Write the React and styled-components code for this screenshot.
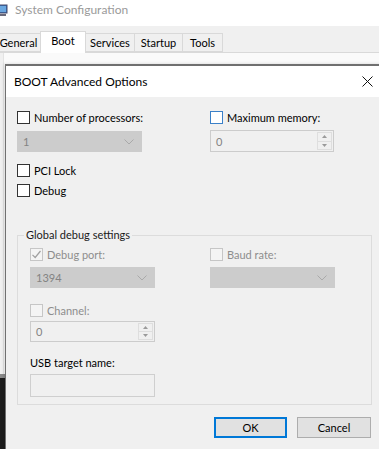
import React from "react";
import styled, { createGlobalStyle } from "styled-components";

const Global = createGlobalStyle`
  html, body { margin: 0; padding: 0; }
  body {
    width: 379px; height: 449px; overflow: hidden;
    font-family: Lato, "Noto Sans", sans-serif;
    font-size: 11px; color: #000;
    background: #f0f0f0;
  }
`;

const Page = styled.div`
  position: relative;
  width: 379px;
  height: 449px;
  overflow: hidden;
  display: flex;
  flex-direction: column;
`;

/* ---------- background window ---------- */
const BgWindow = styled.div`
  display: flex;
  flex-direction: column;
  height: 374px;
  background: #f0f0f0;
`;

const BgTitle = styled.div`
  height: 26px;
  background: #fff;
  display: flex;
  align-items: flex-start;
  padding-top: 2px;
  box-sizing: border-box;
  gap: 7px;
`;

const BgTitleText = styled.span`
  font-size: 12px;
  line-height: 16px;
  color: #9a9a9a;
`;

const TabStrip = styled.div`
  display: flex;
  align-items: flex-end;
  height: 27px;
  box-sizing: border-box;
  background: #f0f0f0;
  border-bottom: 1px solid #d9d9d9;
  margin-left: -4px;
`;

const Tab = styled.div`
  box-sizing: border-box;
  width: ${(p) => p.$w}px;
  height: ${(p) => (p.$active ? 22 : 19)}px;
  margin-bottom: ${(p) => (p.$active ? -1 : 0)}px;
  background: ${(p) => (p.$active ? "#fff" : "#f0f0f0")};
  border: 1px solid #d9d9d9;
  border-bottom: ${(p) => (p.$active ? "none" : "1px solid #d9d9d9")};
  margin-right: -1px;
  position: relative;
  z-index: ${(p) => (p.$active ? 1 : 0)};
  display: flex;
  justify-content: center;
  align-items: ${(p) => (p.$active ? "flex-start" : "center")};
  padding-top: ${(p) => (p.$active ? 2 : 0)}px;
  font-size: 11px;
  line-height: 14px;
`;

const TabPage = styled.div`
  flex: 1;
  background: #fafafa;
  border-left: 1px solid #e3e3e3;
  margin-left: 3px;
`;

const Desktop = styled.div`
  flex: 1;
  background: linear-gradient(90deg, #1c1c1c, #2e2626 60%, #151515);
  border-top: 4px solid #8a8a8a;
`;

/* ---------- dialog ---------- */
const Dialog = styled.div`
  position: absolute;
  left: 5px;
  top: 64px;
  width: 379px;
  box-sizing: border-box;
  border: 1px solid #707070;
  border-top-width: 2px;
  background: #f0f0f0;
  box-shadow: -1px 0 3px rgba(0, 0, 0, 0.15);
`;

const DlgTitle = styled.div`
  height: 31px;
  background: #fff;
  display: flex;
  align-items: center;
  justify-content: space-between;
  padding: 0 10px 0 8px;
`;

const DlgTitleText = styled.span`
  font-size: 12px;
  line-height: 16px;
`;

const DlgBody = styled.div`
  padding: 14px 11px 12px 11px;
  display: flex;
  flex-direction: column;
`;

const TwoCol = styled.div`
  display: grid;
  grid-template-columns: ${(p) => p.$first}px 1fr;
`;

const Field = styled.div`
  display: flex;
  flex-direction: column;
  gap: ${(p) => p.$gap}px;
  margin-top: ${(p) => p.$mt || 0}px;
`;

const CheckStack = styled.div`
  display: flex;
  flex-direction: column;
  gap: 7px;
  margin-top: 12px;
`;

const CheckRow = styled.label`
  display: flex;
  align-items: center;
  gap: 4px;
  height: 13px;
  line-height: 13px;
  color: ${(p) => (p.$disabled ? "#8d8d8d" : "#000")};
`;

const Box = styled.span`
  box-sizing: border-box;
  width: 13px;
  height: 13px;
  flex: none;
  border: 1px solid
    ${(p) =>
      p.$state === "focus" ? "#3a80c8" : p.$state === "disabled" ? "#c6c6c6" : "#333"};
  background: ${(p) => (p.$state === "disabled" ? "#f4f4f4" : "#fff")};
  display: flex;
  align-items: center;
  justify-content: center;
`;

const Combo = styled.div`
  box-sizing: border-box;
  width: ${(p) => p.$w}px;
  height: ${(p) => p.$h}px;
  background: #cccccc;
  border: 1px solid #cccccc;
  display: flex;
  align-items: center;
  justify-content: space-between;
  padding: 0 7px 0 5px;
  color: #838383;
`;

const Spin = styled.div`
  box-sizing: border-box;
  width: ${(p) => p.$w}px;
  height: ${(p) => p.$h}px;
  background: #f0f0f0;
  border: 1px solid #cccccc;
  display: flex;
  align-items: stretch;
  color: #838383;
`;

const SpinText = styled.span`
  flex: 1;
  display: flex;
  align-items: center;
  padding-left: 5px;
`;

const SpinBtns = styled.div`
  width: 15px;
  margin: 1px;
  border: 1px solid #dedede;
  box-sizing: border-box;
  display: flex;
  flex-direction: column;
`;

const SpinHalf = styled.div`
  flex: 1;
  display: flex;
  align-items: center;
  justify-content: center;
  border-top: ${(p) => (p.$bottom ? "1px solid #dedede" : "none")};
`;

const TextBox = styled.div`
  box-sizing: border-box;
  width: 125px;
  height: 23px;
  border: 1px solid #cfcfcf;
  background: #f0f0f0;
`;

const Group = styled.fieldset`
  margin: 31px 0 0 0;
  padding: 0 12px 7px 12px;
  border: 1px solid #dcdcdc;
  display: flex;
  flex-direction: column;
  min-width: 0;
`;

const Legend = styled.legend`
  padding: 0 2px;
  margin-left: -6px;
  font-size: 11px;
  line-height: 14px;
  color: #1a1a1a;
`;

const GroupInner = styled.div`
  display: flex;
  flex-direction: column;
  padding-top: 6px;
`;

const Label = styled.div`
  line-height: 14px;
  height: 14px;
`;

const ButtonRow = styled.div`
  display: flex;
  justify-content: flex-end;
  gap: 10px;
  margin-top: 12px;
  padding-right: 1px;
`;

const Button = styled.button`
  box-sizing: border-box;
  width: ${(p) => p.$w}px;
  height: 21px;
  background: #e1e1e1;
  border: ${(p) => (p.$primary ? "2px solid #0078d7" : "1px solid #adadad")};
  font-family: inherit;
  font-size: 11px;
  color: #000;
  padding: 0;
  margin: 0;
`;

/* ---------- icons ---------- */
const Chevron = () => (
  <svg width="10" height="6" viewBox="0 0 10 6">
    <path d="M0.5 0.5 L5 5 L9.5 0.5" fill="none" stroke="#a9a9a9" strokeWidth="1" />
  </svg>
);

const Arrow = ({ down }) => (
  <svg width="5" height="3" viewBox="0 0 5 3">
    <path d={down ? "M0 0 H5 L2.5 3 Z" : "M0 3 H5 L2.5 0 Z"} fill="#9a9a9a" />
  </svg>
);

const CheckMark = () => (
  <svg width="11" height="11" viewBox="0 0 11 11">
    <path d="M1.5 5.8 L4.2 8.5 L9.5 2" fill="none" stroke="#a0a0a0" strokeWidth="1.2" />
  </svg>
);

const CloseX = () => (
  <svg width="11" height="11" viewBox="0 0 11 11">
    <path d="M0.5 0.5 L10.5 10.5 M10.5 0.5 L0.5 10.5" stroke="#111" strokeWidth="1" />
  </svg>
);

const AppIcon = () => (
  <svg width="8" height="14" viewBox="0 0 8 14" style={{ marginTop: 2 }}>
    <rect x="-4" y="1" width="11" height="8" fill="#2f6fb6" stroke="#4a4a6a" strokeWidth="1" />
    <rect x="-3" y="2" width="9" height="6" fill="#6aa7e0" />
    <rect x="-2" y="10" width="8" height="2" fill="#6a6a7a" />
  </svg>
);

const Check = ({ label, state = "normal", checked, disabled }) => (
  <CheckRow $disabled={disabled}>
    <Box $state={state}>{checked && <CheckMark />}</Box>
    {label}
  </CheckRow>
);

const SpinBox = ({ w, h, value }) => (
  <Spin $w={w} $h={h}>
    <SpinText>{value}</SpinText>
    <SpinBtns>
      <SpinHalf><Arrow /></SpinHalf>
      <SpinHalf $bottom><Arrow down /></SpinHalf>
    </SpinBtns>
  </Spin>
);

const tabs = [
  { name: "General", w: 45 },
  { name: "Boot", w: 46, active: true },
  { name: "Services", w: 50 },
  { name: "Startup", w: 49 },
  { name: "Tools", w: 41 },
];

export default function App() {
  return (
    <>
      <Global />
      <Page>
        <BgWindow>
          <BgTitle>
            <AppIcon />
            <BgTitleText>System Configuration</BgTitleText>
          </BgTitle>
          <TabStrip>
            {tabs.map((t) => (
              <Tab key={t.name} $w={t.w} $active={t.active}>
                {t.name}
              </Tab>
            ))}
          </TabStrip>
          <TabPage />
        </BgWindow>
        <Desktop />

        <Dialog>
          <DlgTitle>
            <DlgTitleText>BOOT Advanced Options</DlgTitleText>
            <CloseX />
          </DlgTitle>
          <DlgBody>
            <TwoCol $first={193}>
              <Field $gap={7}>
                <Check label="Number of processors:" />
                <Combo $w={125} $h={21}>
                  <span>1</span>
                  <Chevron />
                </Combo>
              </Field>
              <Field $gap={6}>
                <Check label="Maximum memory:" state="focus" />
                <SpinBox w={124} h={22} value="0" />
              </Field>
            </TwoCol>

            <CheckStack>
              <Check label="PCI Lock" />
              <Check label="Debug" />
            </CheckStack>

            <Group>
              <Legend>Global debug settings</Legend>
              <GroupInner>
                <TwoCol $first={180}>
                  <Field $gap={6}>
                    <Check label="Debug port:" state="disabled" checked disabled />
                    <Combo $w={125} $h={21}>
                      <span>1394</span>
                      <Chevron />
                    </Combo>
                  </Field>
                  <Field $gap={6}>
                    <Check label="Baud rate:" state="disabled" disabled />
                    <Combo $w={125} $h={21}>
                      <span />
                      <Chevron />
                    </Combo>
                  </Field>
                </TwoCol>
                <Field $gap={4} $mt={16}>
                  <Check label="Channel:" state="disabled" disabled />
                  <SpinBox w={125} h={21} value="0" />
                </Field>
                <Field $gap={4} $mt={14}>
                  <Label>USB target name:</Label>
                  <TextBox />
                </Field>
              </GroupInner>
            </Group>

            <ButtonRow>
              <Button $primary $w={73}>OK</Button>
              <Button $w={74}>Cancel</Button>
            </ButtonRow>
          </DlgBody>
        </Dialog>
      </Page>
    </>
  );
}
